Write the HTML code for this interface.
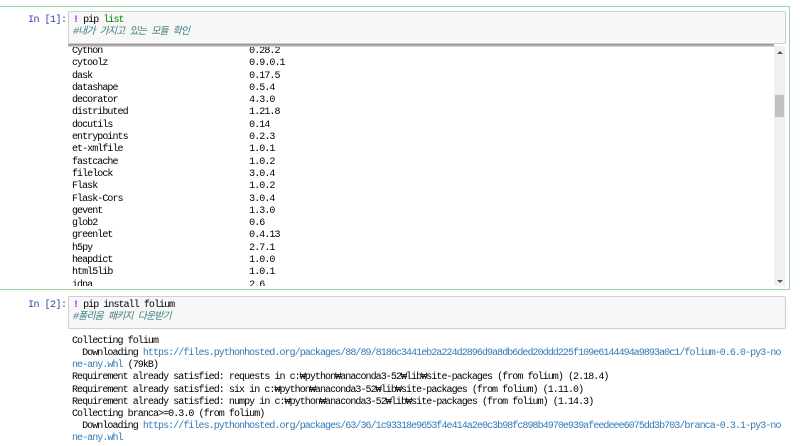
<!DOCTYPE html>
<html><head><meta charset="utf-8"><style>
body{margin:0;width:800px;height:446px;overflow:hidden;background:#fff;font-family:"Liberation Mono","Noto Sans CJK KR",monospace;}
.mono{font-size:10px;letter-spacing:-0.94px;white-space:pre;line-height:12.2px;color:#000;}
.cell1{position:absolute;left:0;top:6px;width:790px;height:284px;border:1px solid #9fd59f;border-left:none;box-sizing:border-box;}
.prompt{position:absolute;left:28px;color:#303f9f;font-size:10px;letter-spacing:-0.5px;white-space:pre;font-family:"Liberation Mono",monospace;}
.inp{position:absolute;left:68px;width:718px;height:33px;background:#f7f7f7;border:1px solid #cfcfcf;box-sizing:border-box;border-radius:2px;}
.inp .mono{position:absolute;left:4px;top:3px;}
.c{color:#408080;font-style:italic;font-family:"Liberation Mono","Noto Sans CJK KR",monospace;}
.g{color:#008000;}
.bang{color:#aa22ff;font-weight:bold;}
a{color:#337ab7;text-decoration:none;}
</style></head><body>
<div class="cell1"></div>
<div class="prompt" style="top:15px">In [1]:</div>
<div class="inp" style="top:11px"><div class="mono"><span class="bang">!</span> pip <span class="g">list</span>
<span class="c">#내가 가지고 있는 모듈 확인</span></div></div>
<div style="position:absolute;left:68px;top:44px;width:706px;height:3px;background:linear-gradient(#888,#ddd);"></div>
<div style="position:absolute;left:68px;top:47px;width:706px;height:239px;overflow:hidden;">
<div class="mono" style="position:absolute;left:4px;top:-1px;line-height:12.3px">Cython                             0.28.2
cytoolz                            0.9.0.1
dask                               0.17.5
datashape                          0.5.4
decorator                          4.3.0
distributed                        1.21.8
docutils                           0.14
entrypoints                        0.2.3
et-xmlfile                         1.0.1
fastcache                          1.0.2
filelock                           3.0.4
Flask                              1.0.2
Flask-Cors                         3.0.4
gevent                             1.3.0
glob2                              0.6
greenlet                           0.4.13
h5py                               2.7.1
heapdict                           1.0.0
html5lib                           1.0.1
idna                               2.6</div></div>
<div style="position:absolute;left:774px;top:46px;width:11px;height:240px;background:#f0f0f0;"></div>
<div style="position:absolute;left:775px;top:95px;width:9px;height:22px;background:#c1c1c1;"></div>
<div style="position:absolute;left:777px;top:51px;width:0;height:0;border-left:3px solid transparent;border-right:3px solid transparent;border-bottom:3px solid #555;"></div>
<div style="position:absolute;left:777px;top:280px;width:0;height:0;border-left:3px solid transparent;border-right:3px solid transparent;border-top:3px solid #555;"></div>
<div class="prompt" style="top:300px">In [2]:</div>
<div class="inp" style="top:296px"><div class="mono"><span class="bang">!</span> pip install folium
<span class="c">#폴리움 패키지 다운받기</span></div></div>
<div class="mono" style="position:absolute;left:72px;top:336px;line-height:12.15px">Collecting folium
  Downloading <a>https://files.pythonhosted.org/packages/88/89/8186c3441eb2a224d2896d9a8db6ded20ddd225f109e6144494a9893a0c1/folium-0.6.0-py3-no</a>
<a>ne-any.whl</a> (79kB)
Requirement already satisfied: requests in c:₩python₩anaconda3-52₩lib₩site-packages (from folium) (2.18.4)
Requirement already satisfied: six in c:₩python₩anaconda3-52₩lib₩site-packages (from folium) (1.11.0)
Requirement already satisfied: numpy in c:₩python₩anaconda3-52₩lib₩site-packages (from folium) (1.14.3)
Collecting branca&gt;=0.3.0 (from folium)
  Downloading <a>https://files.pythonhosted.org/packages/63/36/1c93318e9653f4e414a2e0c3b98fc898b4970e939afeedeee6075dd3b703/branca-0.3.1-py3-no</a>
<a>ne-any.whl</a></div>
</body></html>
